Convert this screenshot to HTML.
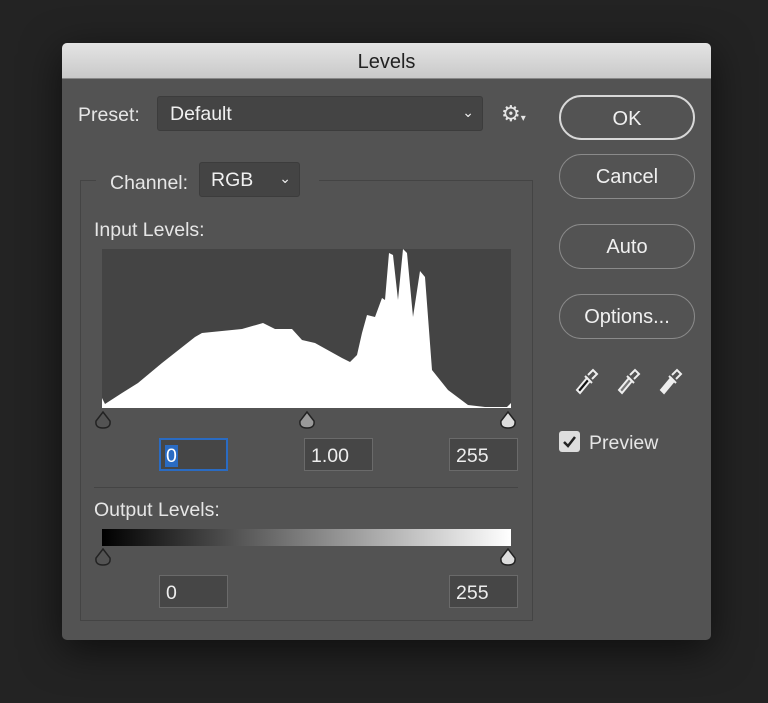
<!DOCTYPE html>
<html><head><style>
body{margin:0;width:768px;height:703px;background:#232323;font-family:"Liberation Sans",sans-serif;position:relative;overflow:hidden}
.dlg{position:absolute;left:62px;top:43px;width:649px;height:597px;background:#535353;border-radius:5px;box-shadow:0 10px 40px rgba(0,0,0,.6);overflow:hidden}
.title{position:absolute;left:0;top:0;width:100%;height:35px;background:linear-gradient(#e4e4e4,#c9c9c9);border-bottom:1px solid #888;text-align:center;line-height:38px;font-size:20px;color:#222}
.a{position:absolute}
.t{position:absolute;color:#e6e6e6;font-size:19.5px}
.dd{position:absolute;background:#444;border:1px solid #3c3c3c;border-radius:3px;color:#f0f0f0;font-size:19.5px;box-sizing:border-box}
.btn{position:absolute;left:497px;width:136px;height:45px;border:1.5px solid #8a8a8a;border-radius:23px;box-sizing:border-box;color:#f0f0f0;font-size:20px;text-align:center;line-height:44px}
.in{position:absolute;width:69px;height:33px;background:#464646;border:1px solid #6a6a6a;box-sizing:border-box;color:#eee;font-size:19.5px;line-height:35px;padding-left:6px}
</style></head><body>
<div class="dlg">
<div class="title">Levels</div>
<div class="t" style="left:16px;top:61px">Preset:</div>
<div class="dd" style="left:95px;top:53px;width:326px;height:35px;line-height:35px;padding-left:12px">Default<span style="position:absolute;right:8px;top:-2px;font-size:14px">&#8964;</span></div>
<div class="t" style="left:439px;top:58px;font-size:22px">&#9881;<span style="font-size:10px">&#9662;</span></div>
<div class="btn" style="top:52px;border-color:#d8d8d8;border-width:2px">OK</div>
<div class="btn" style="top:111px">Cancel</div>
<div class="btn" style="top:181px">Auto</div>
<div class="btn" style="top:251px">Options...</div>
<svg class="a" style="left:505px;top:322px" width="120" height="32" viewBox="0 0 120 32">
<g stroke="#eee" stroke-width="2" fill="none">
<path d="M10 25 L20 13 L23 16 L13 28 Z" fill="#111"/><path d="M18 11 L25 18 M21 10 L26 5 L30 9 L25 14"/>
<path d="M52 25 L62 13 L65 16 L55 28 Z" fill="#777"/><path d="M60 11 L67 18 M63 10 L68 5 L72 9 L67 14"/>
<path d="M94 25 L104 13 L107 16 L97 28 Z" fill="#eee"/><path d="M102 11 L109 18 M105 10 L110 5 L114 9 L109 14"/>
</g></svg>
<div class="a" style="left:497px;top:388px;width:21px;height:21px;background:#ddd;border-radius:3px"></div>
<svg class="a" style="left:497px;top:388px" width="21" height="21"><path d="M5 11 L9 15 L16 6" stroke="#222" stroke-width="2.5" fill="none"/></svg>
<div class="t" style="left:527px;top:389px">Preview</div>

<div class="a" style="left:18px;top:137px;width:453px;height:441px;border:1px solid #444;box-sizing:border-box"></div>
<div class="a" style="left:34px;top:125px;width:223px;height:30px;background:#535353"></div>
<div class="t" style="left:48px;top:129px">Channel:</div>
<div class="dd" style="left:137px;top:119px;width:101px;height:35px;line-height:35px;padding-left:11px">RGB<span style="position:absolute;right:8px;top:-2px;font-size:14px">&#8964;</span></div>
<div class="t" style="left:32px;top:176px">Input Levels:</div>
<svg class="a" style="left:0;top:0" width="649" height="597">
<rect x="40" y="206" width="409" height="159" fill="#444"/>
<polygon fill="#fff" transform="translate(-62,-43)" points="102,408 102,398 105,404 122,393 138,383 162,363 195,337 202,333 242,329 263,323 275,329 292,329 302,340 315,343 342,358 350,362 357,355 362,333 367,315 375,317 382,298 385,300 389,253 393,255 398,300 403,249 407,253 413,317 420,271 425,277 432,370 448,390 468,405 485,407 507,407 511,403 511,408"/>
<g stroke="#222" stroke-width="1.5" transform="translate(-62,-43)">
<path d="M103 412 L110 421 Q111 428 103 428 Q95 428 96 421 Z" fill="#535353"/>
<path d="M307 412 L314 421 Q315 428 307 428 Q299 428 300 421 Z" fill="#999"/>
<path d="M508 412 L515 421 Q516 428 508 428 Q500 428 501 421 Z" fill="#ddd"/>
<path d="M103 549 L110 558 Q111 565 103 565 Q95 565 96 558 Z" fill="#535353"/>
<path d="M508 549 L515 558 Q516 565 508 565 Q500 565 501 558 Z" fill="#ddd"/>
</g>
<defs><linearGradient id="g"><stop offset="0" stop-color="#000"/><stop offset="1" stop-color="#fff"/></linearGradient></defs>
<rect x="40" y="486" width="409" height="17" fill="url(#g)"/>
<line x1="32" y1="444.5" x2="456" y2="444.5" stroke="#444"/>
</svg>
<div class="in" style="left:97px;top:395px;border:2px solid #2a6bc2;line-height:33px;padding-left:4px"><span style="background:#2a6bc2;color:#fff;padding:0 1px">0</span></div>
<div class="in" style="left:242px;top:395px">1.00</div>
<div class="in" style="left:387px;top:395px">255</div>
<div class="t" style="left:32px;top:456px">Output Levels:</div>
<div class="in" style="left:97px;top:532px">0</div>
<div class="in" style="left:387px;top:532px">255</div>
</div>
</body></html>
